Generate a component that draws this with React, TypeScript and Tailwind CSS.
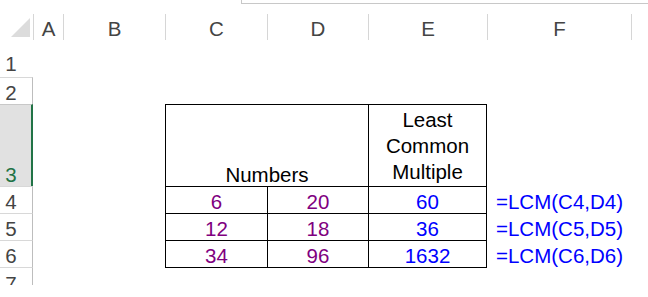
import React from "react";

const font = { fontFamily: '"Liberation Sans", Arial, sans-serif' };

const cols = ["A", "B", "C", "D", "E", "F", ""];

const data = [
  { r: "4", c: "6", d: "20", e: "60", f: "=LCM(C4,D4)" },
  { r: "5", c: "12", d: "18", e: "36", f: "=LCM(C5,D5)" },
  { r: "6", c: "34", d: "96", e: "1632", f: "=LCM(C6,D6)" },
];

function RowHead({ label, extra = "", inner = "" }: { label: string; extra?: string; inner?: string }) {
  return (
    <div className={`flex items-end border-r border-r-[#bdbdbd] border-t border-t-[#d8d8d8] text-[#444444] ${extra}`}>
      <span className={`w-[22px] text-center ${inner}`}>{label}</span>
    </div>
  );
}

export default function App() {
  return (
    <div className="w-[648px] h-[297px] bg-white overflow-hidden text-[20.5px] leading-[23px]" style={font}>
      <div className="h-[14px]">
        <div className="ml-[241px] h-[4px] border-l border-b border-[#c8c8c8]" />
      </div>
      <div className="grid grid-cols-[33px_30px_102px_102px_101px_119px_144px_17px] grid-rows-[26px_37px_27px_82px_27px_27px_27px_18px]">
        {/* header row */}
        <div className="flex items-end justify-end pr-[3px] pb-[3px]">
          <svg width="19" height="19" viewBox="0 0 19 19">
            <polygon points="19,0 19,19 0,19" fill="#dcdcdc" />
          </svg>
        </div>
        {cols.map((c, i) => (
          <div key={i} className="flex items-end justify-center border-l border-[#d6d6d6] text-[#444444]">
            {c}
          </div>
        ))}

        {/* row 1 */}
        <div className="flex items-end pb-[2px] text-[#444444]">
          <span className="w-[22px] text-center">1</span>
        </div>
        <div className="col-span-7" />

        {/* row 2 */}
        <RowHead label="2" extra="border-t-[#b8b8b8]" />
        <div className="col-span-7" />

        {/* row 3 */}
        <div className="flex items-end bg-[#e1e1e1] border-t border-t-[#c8c8c8] border-r-2 border-r-[#217346] text-[#217346]">
          <span className="w-[22px] text-center">3</span>
        </div>
        <div />
        <div />
        <div className="col-span-2 flex items-end justify-center border-l border-t border-black text-black">
          Numbers
        </div>
        <div className="flex items-end justify-center border-l border-t border-r border-black text-black text-center leading-[26px] pb-[1px]">
          <span>
            Least
            <br />
            Common
            <br />
            Multiple
          </span>
        </div>
        <div />
        <div />

        {data.map((row) => (
          <React.Fragment key={row.r}>
            <RowHead label={row.r} extra={row.r === "4" ? "border-t-[#b4b4b4]" : ""} />
            <div />
            <div />
            <div className="flex items-end justify-center border-l border-t border-black text-[#800080]">{row.c}</div>
            <div className="flex items-end justify-center border-l border-t border-black text-[#800080]">{row.d}</div>
            <div className="flex items-end justify-center border-l border-t border-r border-black text-[#0000ff]">{row.e}</div>
            <div className="flex items-end pl-[9px] text-[#0000ff] whitespace-nowrap">{row.f}</div>
            <div />
          </React.Fragment>
        ))}

        {/* row 7 (clipped at the bottom, as in the reference) */}
        <div className="overflow-hidden border-r border-r-[#bdbdbd] border-t border-t-[#d8d8d8] text-[#444444]">
          <div className="h-[27px] flex items-end">
            <span className="w-[22px] text-center">7</span>
          </div>
        </div>
        <div />
        <div />
        <div className="border-t border-black" />
        <div className="border-t border-black" />
        <div className="border-t border-black" />
        <div />
        <div />
      </div>
    </div>
  );
}
